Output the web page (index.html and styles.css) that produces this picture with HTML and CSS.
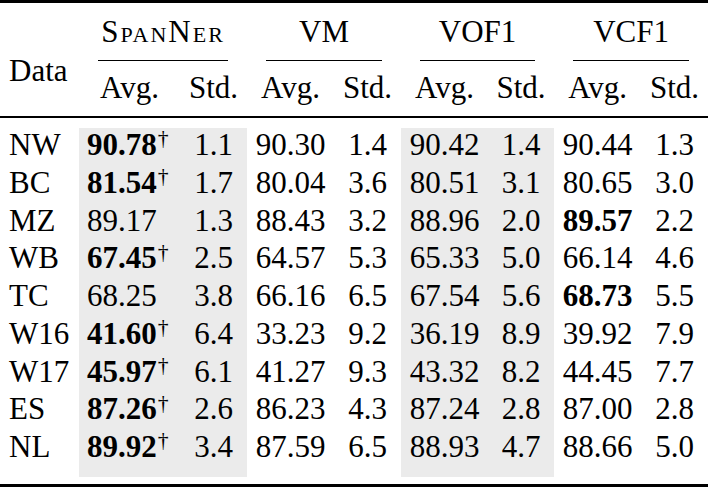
FILE: index.html
```html
<!DOCTYPE html>
<html lang="en">
<head>
  <meta charset="UTF-8" />
  <title>SpanNer results</title>
  <link rel="stylesheet" href="styles.css">
</head>
<body>
  <div class="booktab">
    <table class="results">
      <colgroup>
        <col class="c-data">
        <col class="c-span-avg">
        <col class="c-std">
        <col class="c-avg">
        <col class="c-std">
        <col class="c-avg">
        <col class="c-std-narrow">
        <col class="c-avg">
        <col class="c-std">
      </colgroup>
      <thead>
        <tr class="groups">
          <th rowspan="2" class="data">Data</th>
          <th colspan="2" class="group"><div class="cmid"><span class="sc">SpanNer</span></div></th>
          <th colspan="2" class="group"><div class="cmid">VM</div></th>
          <th colspan="2" class="group"><div class="cmid">VOF1</div></th>
          <th colspan="2" class="group"><div class="cmid">VCF1</div></th>
        </tr>
        <tr class="subs">
          <th>Avg.</th><th>Std.</th>
          <th>Avg.</th><th>Std.</th>
          <th>Avg.</th><th>Std.</th>
          <th>Avg.</th><th>Std.</th>
        </tr>
      </thead>
      <tbody>
        <tr>
          <td>NW</td><td><b>90.78</b><sup>†</sup></td><td>1.1</td>
          <td>90.30</td><td>1.4</td><td>90.42</td><td>1.4</td><td>90.44</td><td>1.3</td>
        </tr>
        <tr>
          <td>BC</td><td><b>81.54</b><sup>†</sup></td><td>1.7</td>
          <td>80.04</td><td>3.6</td><td>80.51</td><td>3.1</td><td>80.65</td><td>3.0</td>
        </tr>
        <tr>
          <td>MZ</td><td>89.17</td><td>1.3</td>
          <td>88.43</td><td>3.2</td><td>88.96</td><td>2.0</td><td><b>89.57</b></td><td>2.2</td>
        </tr>
        <tr>
          <td>WB</td><td><b>67.45</b><sup>†</sup></td><td>2.5</td>
          <td>64.57</td><td>5.3</td><td>65.33</td><td>5.0</td><td>66.14</td><td>4.6</td>
        </tr>
        <tr>
          <td>TC</td><td>68.25</td><td>3.8</td>
          <td>66.16</td><td>6.5</td><td>67.54</td><td>5.6</td><td><b>68.73</b></td><td>5.5</td>
        </tr>
        <tr>
          <td>W16</td><td><b>41.60</b><sup>†</sup></td><td>6.4</td>
          <td>33.23</td><td>9.2</td><td>36.19</td><td>8.9</td><td>39.92</td><td>7.9</td>
        </tr>
        <tr>
          <td>W17</td><td><b>45.97</b><sup>†</sup></td><td>6.1</td>
          <td>41.27</td><td>9.3</td><td>43.32</td><td>8.2</td><td>44.45</td><td>7.7</td>
        </tr>
        <tr>
          <td>ES</td><td><b>87.26</b><sup>†</sup></td><td>2.6</td>
          <td>86.23</td><td>4.3</td><td>87.24</td><td>2.8</td><td>87.00</td><td>2.8</td>
        </tr>
        <tr>
          <td>NL</td><td><b>89.92</b><sup>†</sup></td><td>3.4</td>
          <td>87.59</td><td>6.5</td><td>88.93</td><td>4.7</td><td>88.66</td><td>5.0</td>
        </tr>
      </tbody>
    </table>
  </div>
</body>
</html>
```

FILE: styles.css
```css
* {
  box-sizing: border-box;
}

body {
  margin: 0;
  background: #fff;
  color: #000;
  font-family: 'Liberation Serif', 'Times New Roman', serif;
}

/* booktabs style top and bottom rules */
.booktab {
  width: 708px;
  border-top: 3px solid #000;
  border-bottom: 3px solid #000;
  padding-bottom: 7px;
}

.results {
  width: 708px;
  table-layout: fixed;
  border-spacing: 0;
  font-size: 31px;
  line-height: 34px;
}

.c-data { width: 79px; }
.c-span-avg { width: 101px; }
.c-avg { width: 87px; }
.c-std { width: 67px; }
.c-std-narrow { width: 66px; }

.results th,
.results td {
  padding: 0 8px;
  font-weight: normal;
  text-align: center;
  white-space: nowrap;
}

.groups th {
  padding-top: 11.5px;
}

.groups .group {
  padding-left: 19px;
  padding-right: 19px;
  padding-bottom: 0;
}

.cmid {
  border-bottom: 1px solid #000;
  padding-bottom: 11.5px;
}

.sc {
  font-variant: small-caps;
  letter-spacing: 2px;
}

.groups .data {
  vertical-align: top;
  text-align: left;
  padding-top: 50.5px;
  padding-left: 9px;
  border-bottom: 2px solid #000;
}

.subs th {
  padding-top: 9.5px;
  padding-bottom: 11.5px;
  border-bottom: 2px solid #000;
}

.results td {
  vertical-align: top;
  padding-bottom: 3.75px;
}

.results td:first-child {
  text-align: left;
  padding-left: 9px;
}

.results td:nth-child(2) {
  text-align: left;
}

.results td:nth-child(2),
.results td:nth-child(3),
.results td:nth-child(6),
.results td:nth-child(7) {
  background-color: #ebebeb;
}

tbody tr:first-child td {
  border-top: 10px solid transparent;
  background-clip: padding-box;
}

tbody tr:last-child td {
  padding-bottom: 13px;
}

b {
  font-weight: bold;
}

sup {
  font-size: 0.7em;
  font-weight: normal;
  line-height: 0;
  vertical-align: 0.45em;
  margin-left: 1px;
}
```
